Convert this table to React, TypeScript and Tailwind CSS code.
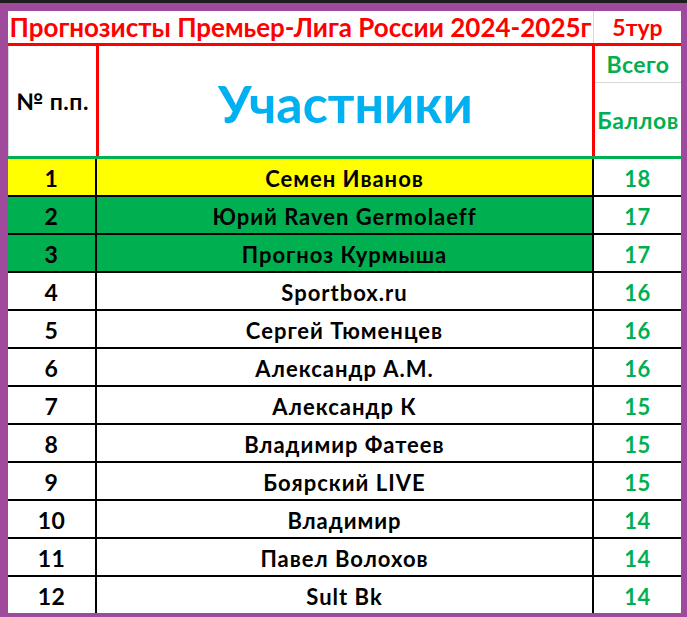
import React from "react";

interface Entry {
  place: number;
  name: string;
  points: number;
  bg: string;
}

const rows: Entry[] = [
  { place: 1, name: "Семен Иванов", points: 18, bg: "bg-[#ffff00]" },
  { place: 2, name: "Юрий Raven Germolaeff", points: 17, bg: "bg-[#00b050]" },
  { place: 3, name: "Прогноз Курмыша", points: 17, bg: "bg-[#00b050]" },
  { place: 4, name: "Sportbox.ru", points: 16, bg: "bg-white" },
  { place: 5, name: "Сергей Тюменцев", points: 16, bg: "bg-white" },
  { place: 6, name: "Александр А.М.", points: 16, bg: "bg-white" },
  { place: 7, name: "Александр К", points: 15, bg: "bg-white" },
  { place: 8, name: "Владимир Фатеев", points: 15, bg: "bg-white" },
  { place: 9, name: "Боярский LIVE", points: 15, bg: "bg-white" },
  { place: 10, name: "Владимир", points: 14, bg: "bg-white" },
  { place: 11, name: "Павел Волохов", points: 14, bg: "bg-white" },
  { place: 12, name: "Sult Bk", points: 14, bg: "bg-white" },
];

const App = () => {
  return (
    <div className="w-[687px] h-[617px] overflow-hidden bg-[#1e1e1e] pt-[3px] font-['Lato','Liberation_Sans',sans-serif]">
      <div className="h-[614px] bg-[#a04a9c] pl-[8px] pr-[6px] pt-[8px] pb-[4px]">
        <div className="h-[602px] bg-white overflow-hidden flex flex-col">
          {/* title row */}
          <div className="flex h-[35px] border-b-[3px] border-[#ff0000] shrink-0">
            <div className="w-[586px] border-r border-[#d9d9d9] flex items-center justify-center text-[26px] font-bold text-[#ff0000] leading-none whitespace-nowrap">
              Прогнозисты Премьер-Лига России 2024-2025г
            </div>
            <div className="flex-1 flex items-center justify-center text-[23px] font-bold text-[#ff0000] leading-none">
              5тур
            </div>
          </div>

          {/* header row */}
          <div className="flex h-[113px] border-b-[3px] border-[#00b050] shrink-0">
            <div className="w-[91px] border-r-[3px] border-l border-l-[#d9d9d9] border-r-[#ff0000] flex items-center justify-center text-[23px] tracking-[0.5px] font-bold text-black whitespace-nowrap">
              № п.п.
            </div>
            <div className="w-[496px] border-r-[3px] border-[#ff0000] flex items-center justify-center text-[52px] font-bold text-[#00b0f0] leading-none pt-[3px]">
              Участники
            </div>
            <div className="flex-1 flex flex-col">
              <div className="h-[37px] border-b border-[#d9d9d9] flex items-center justify-center text-[23px] tracking-[0.5px] font-bold text-[#00b050]">
                Всего
              </div>
              <div className="flex-1 flex items-center justify-center text-[23px] tracking-[0.5px] font-bold text-[#00b050] pt-[2px]">
                Баллов
              </div>
            </div>
          </div>

          {/* data rows */}
          {rows.map((r) => (
            <div key={r.place} className="flex h-[38px] border-b-2 border-black shrink-0">
              <div className={`w-[89px] border-r-2 border-black flex items-center justify-center pt-[2px] text-[23px] tracking-[0.5px] font-bold text-black ${r.bg}`}>
                {r.place}
              </div>
              <div className={`w-[497px] border-r-2 border-black flex items-center justify-center pt-[2px] text-[22px] tracking-[1px] font-bold text-black ${r.bg}`}>
                {r.name}
              </div>
              <div className="flex-1 flex items-center justify-center pt-[2px] text-[22px] tracking-[0.5px] font-bold text-[#00b050]">
                {r.points}
              </div>
            </div>
          ))}
        </div>
      </div>
    </div>
  );
};

export default App;
